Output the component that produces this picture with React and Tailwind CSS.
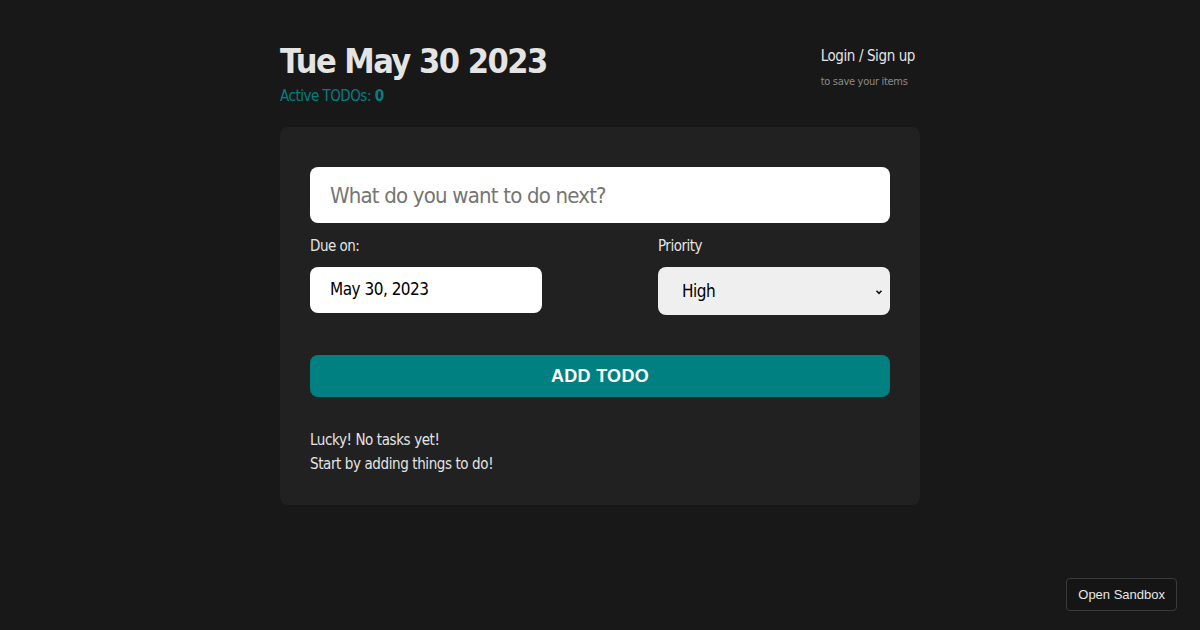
const FONT = '[font-family:"DejaVu_Sans_Condensed","Liberation_Sans_Narrow",sans-serif]';

export default function App() {
    return (
        <div className="min-h-[630px] w-full bg-[#181818] relative">
            <div className={`w-[640px] mx-auto pt-[38px] ${FONT}`}>
                {/* Header */}
                <div className="flex justify-between items-start">
                    <div>
                        <h1 className="text-[34px] leading-[46px] font-bold tracking-[-1.5px] text-[#e4e4e4]">Tue May 30 2023</h1>
                        <p className="text-[15px] leading-[22px] tracking-[-0.5px] text-[#008080] mt-[1px]">
                            Active TODOs: <span className="font-bold">0</span>
                        </p>
                    </div>
                    <div className="pt-[6px] pr-[5px]">
                        <p className="text-[15px] leading-[24px] tracking-[-0.4px] text-[#e4e4e4]">Login / Sign up</p>
                        <p className="text-[11px] leading-[16px] tracking-[-0.3px] text-[#8a8a8a] mt-[6px]">to save your items</p>
                    </div>
                </div>

                {/* Card */}
                <div className="mt-[20px] bg-[#212121] rounded-lg px-[30px] pt-[40px] pb-[29px]">
                    <input
                        type="text"
                        placeholder="What do you want to do next?"
                        className={`w-full h-[56px] bg-white rounded-lg px-5 text-[22px] tracking-[-0.8px] text-black placeholder:text-[#757575] outline-none ${FONT}`}
                    />
                    <div className="flex justify-between mt-[12px]">
                        <div className="w-[232px]">
                            <label className="block text-[15px] leading-[22px] tracking-[-0.5px] text-[#e4e4e4]">Due on:</label>
                            <div className="mt-[10px] h-[46px] bg-white rounded-lg px-5 flex items-center text-[17px] tracking-[-0.5px] text-black">
                                May 30, 2023
                            </div>
                        </div>
                        <div className="w-[232px]">
                            <label className="block text-[15px] leading-[22px] tracking-[-0.5px] text-[#e4e4e4]">Priority</label>
                            <div className="mt-[10px] h-[48px] bg-[#efefef] rounded-lg pl-6 pr-[6px] pt-[2px] flex items-center justify-between text-[17px] tracking-[-0.5px] text-black">
                                <span>High</span>
                                <svg width="10" height="10" viewBox="0 0 10 10" fill="none" stroke="#111" strokeWidth="1.6">
                                    <path d="M2.5 3.8 L5 6.3 L7.5 3.8" />
                                </svg>
                            </div>
                        </div>
                    </div>

                    <button className="mt-[40px] w-full h-[42px] bg-[#008080] rounded-lg text-white text-[18px] font-bold tracking-[0.3px] [font-family:'Liberation_Sans',Arial,sans-serif]">
                        ADD TODO
                    </button>

                    <div className="mt-[31px] text-[15px] leading-[24px] tracking-[-0.4px] text-[#e4e4e4]">
                        <p>Lucky! No tasks yet!</p>
                        <p>Start by adding things to do!</p>
                    </div>
                </div>
            </div>

            <div className="absolute right-[23px] bottom-[19px] h-[33px] px-[11px] flex items-center bg-[#151515] border border-[#3a3a3a] rounded-[4px] text-[13px] text-[#e6e6e6] [font-family:'Liberation_Sans',Arial,sans-serif]">
                Open Sandbox
            </div>
        </div>
    );
}
